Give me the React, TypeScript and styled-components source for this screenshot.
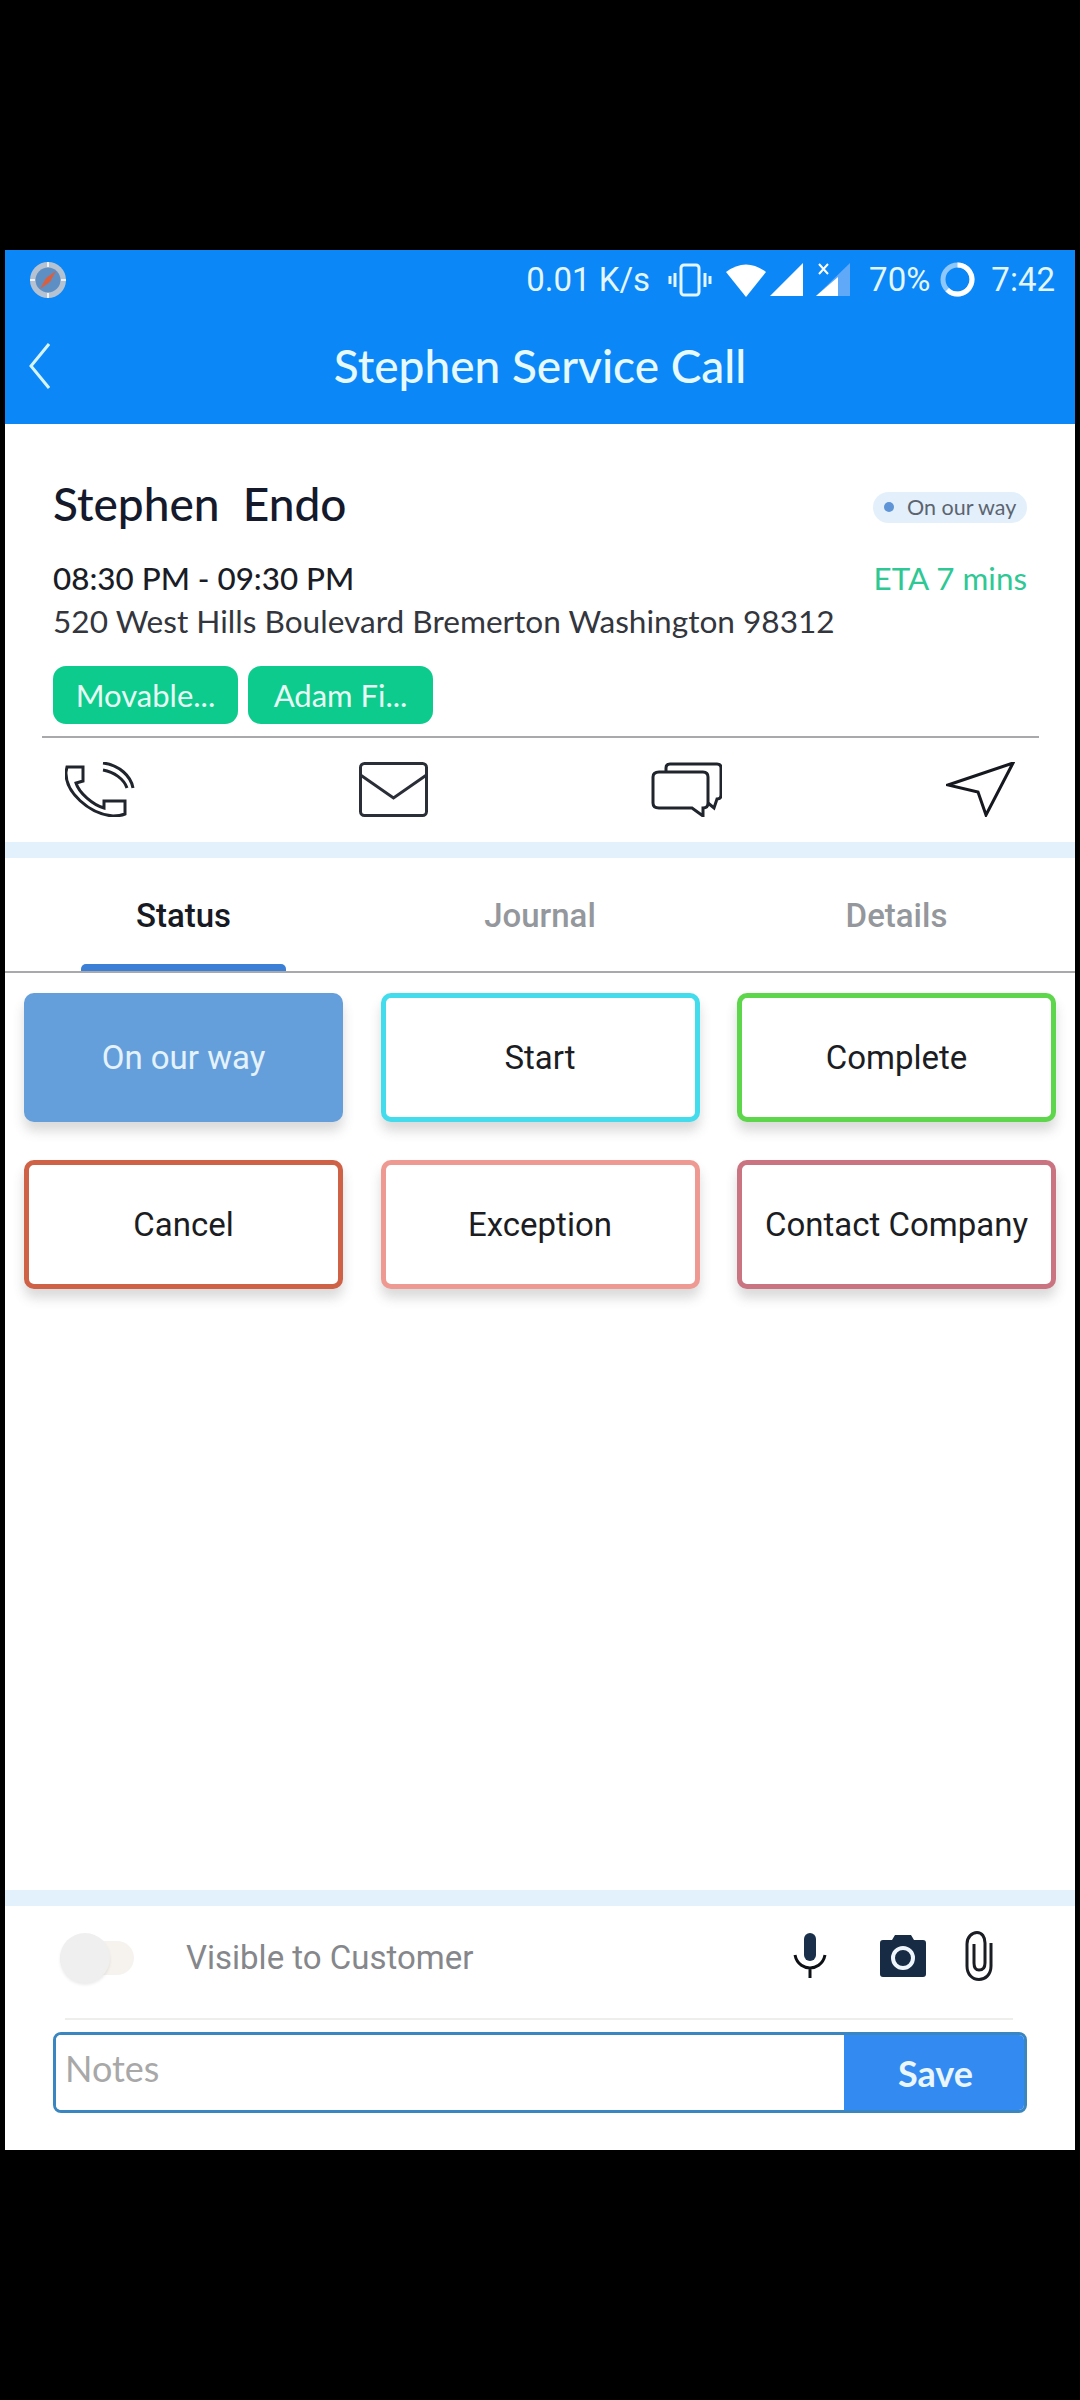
import * as React from 'react';
import styled, { createGlobalStyle } from 'styled-components';

const GlobalStyle = createGlobalStyle`
    html, body {
        margin: 0;
        padding: 0;
        background: #000;
    }
    * {
        box-sizing: border-box;
    }
`;

const Page = styled.div`
    width: 1080px;
    height: 2400px;
    padding: 250px 5px;
    background: #000;
    font-family: 'Lato', 'Noto Sans', sans-serif;
`;

const Screen = styled.div`
    display: flex;
    flex-direction: column;
    width: 1070px;
    height: 1900px;
    background: #fff;
`;

const Header = styled.header`
    background: #0b87f7;
    color: #e2f6fc;
`;

const StatusBar = styled.div`
    display: flex;
    align-items: center;
    justify-content: space-between;
    height: 64px;
    padding: 0 20px 5px 24px;
`;

const StatusRight = styled.div`
    display: flex;
    align-items: center;
`;

const StatusText = styled.span<{ $gap?: number }>`
    margin-left: ${props => props.$gap || 0}px;
    font-family: 'Roboto', sans-serif;
    font-size: 33px;
    line-height: 36px;
    white-space: nowrap;
`;

const StatusIcon = styled.svg<{ $gap: number }>`
    display: block;
    flex: none;
    margin-left: ${props => props.$gap}px;
`;

const NavBar = styled.div`
    display: flex;
    align-items: center;
    height: 110px;
    padding: 0 0 6px 24px;
`;

const NavTitle = styled.h1`
    flex: 1;
    margin: 0 0 0 -21px;
    padding-right: 24px;
    text-align: center;
    font-size: 46px;
    font-weight: 500;
    line-height: 56px;
    color: #e6f9fc;
`;

const Info = styled.section`
    padding: 56px 48px 12px 48px;
`;

const InfoRow = styled.div`
    display: flex;
    align-items: center;
    justify-content: space-between;
`;

const Name = styled.div`
    font-size: 46px;
    line-height: 48px;
    font-weight: 500;
    color: #14192b;
    white-space: pre;
`;

const StateChip = styled.div`
    display: flex;
    align-items: center;
    width: 154px;
    height: 31px;
    margin-top: 6px;
    padding-left: 11px;
    border-radius: 16px;
    background: #e3f0fb;
    font-size: 21.5px;
    color: #5c6470;
`;

const StateDot = styled.span`
    width: 10px;
    height: 10px;
    margin-right: 13px;
    border-radius: 50%;
    background: #5f94d6;
`;

const TimeRow = styled(InfoRow)`
    margin-top: 32px;
`;

const TimeText = styled.div`
    font-size: 31.4px;
    line-height: 36px;
    font-weight: 500;
    color: #1a1d26;
`;

const Eta = styled.div`
    font-size: 31.4px;
    line-height: 36px;
    color: #2fc894;
`;

const Address = styled.div`
    margin-top: 7px;
    font-size: 31.6px;
    line-height: 36px;
    color: #33363d;
    white-space: nowrap;
`;

const Tags = styled.div`
    display: flex;
    gap: 10px;
    margin-top: 27px;
`;

const Tag = styled.div`
    display: flex;
    align-items: center;
    justify-content: center;
    width: 185px;
    height: 58px;
    border-radius: 13px;
    background: #0dcb8d;
    color: #e8fbf4;
    font-size: 31px;
`;

const Divider = styled.div`
    height: 2px;
    margin: 0 36px 0 37px;
    background: #a9a9ab;
`;

const Actions = styled.div`
    display: flex;
    align-items: center;
    justify-content: space-between;
    padding: 24px 60px 25px;
`;

const Band = styled.div`
    flex: none;
    height: 16px;
    background: #e3f1fc;
`;

const TabBar = styled.div`
    display: grid;
    grid-template-columns: repeat(3, 319px);
    column-gap: 37.5px;
    height: 115px;
    padding: 0 19px;
    border-bottom: 2px solid #a9a9ab;
`;

const Tab = styled.div<{ $active?: boolean }>`
    display: flex;
    justify-content: center;
    position: relative;
    padding-top: 37px;
    font-family: 'Roboto', sans-serif;
    font-size: 33px;
    line-height: 42px;
    font-weight: 500;
    color: ${props => (props.$active ? '#171a22' : '#94979c')};

    &::after {
        content: '';
        display: ${props => (props.$active ? 'block' : 'none')};
        position: absolute;
        left: 57px;
        bottom: 0;
        width: 205px;
        height: 7px;
        border-radius: 5px 5px 0 0;
        background: #3b7fd6;
    }
`;

const StatusGrid = styled.div`
    flex: 1;
    display: grid;
    grid-template-columns: repeat(3, 319px);
    grid-auto-rows: 129px;
    gap: 38px 37.5px;
    align-content: start;
    padding: 20px 19px 0;
`;

const StatusButton = styled.div<{ $color: string; $filled?: boolean }>`
    display: flex;
    align-items: center;
    justify-content: center;
    border: 5px solid ${props => props.$color};
    border-radius: 10px;
    background: ${props => (props.$filled ? props.$color : '#fff')};
    box-shadow: 0 9px 12px rgba(70, 70, 70, 0.2);
    font-family: 'Roboto', sans-serif;
    font-size: 33px;
    color: ${props => (props.$filled ? '#e4f3fb' : '#1b1d23')};
    white-space: nowrap;
`;

const Visibility = styled.div`
    display: flex;
    align-items: center;
    height: 112px;
    padding: 0 0 9px 55px;
`;

const Toggle = styled.div`
    position: relative;
    flex: none;
    width: 74px;
    height: 34px;
    margin-right: 52px;
    border-radius: 17px;
    background: #f6f3ef;

    &::before {
        content: '';
        position: absolute;
        left: 0;
        top: -8px;
        width: 50px;
        height: 50px;
        border-radius: 50%;
        background: #efefef;
        box-shadow: 0 2px 3px rgba(0, 0, 0, 0.08);
    }
`;

const VisibleLabel = styled.div`
    flex: 1;
    font-family: 'Roboto', sans-serif;
    font-size: 33px;
    color: #85878b;
`;

const MediaIcons = styled.div`
    display: flex;
    align-items: center;
    margin-bottom: 4px;
    padding-right: 82px;
`;

const MediaIcon = styled.svg<{ $gap: number }>`
    display: block;
    margin-left: ${props => props.$gap}px;
`;

const ThinLine = styled.div`
    height: 2px;
    margin: 0 62px 0 60px;
    background: #eeeeea;
`;

const NotesForm = styled.div`
    display: flex;
    height: 81px;
    margin: 12px 48px 0;
    border: 3px solid #3a86c0;
    border-radius: 8px;
    overflow: hidden;
`;

const NotesField = styled.div`
    flex: 1;
    padding: 12px 0 0 9px;
    font-size: 36px;
    line-height: 42px;
    color: #a8a8a8;
    background: #fff;
`;

const SaveButton = styled.div`
    display: flex;
    align-items: center;
    justify-content: center;
    width: 183px;
    margin: -3px -3px -3px 0;
    background: #338af0;
    color: #e9f6fc;
    font-size: 36px;
    font-weight: 700;
`;

const BottomGap = styled.div`
    height: 37px;
`;

const tags = ['Movable...', 'Adam Fi...'];

const buttons = [
    { label: 'On our way', color: '#659fdb', filled: true },
    { label: 'Start', color: '#42dcec' },
    { label: 'Complete', color: '#5ed64b' },
    { label: 'Cancel', color: '#cf6147' },
    { label: 'Exception', color: '#ee9a92' },
    { label: 'Contact Company', color: '#c97480' }
];

const App = () => (
    <Page>
        <GlobalStyle />
        <Screen>
            <Header>
                <StatusBar>
                    <svg width="38" height="38" viewBox="0 0 38 38">
                        <circle cx="19" cy="19" r="18" fill="#b4c2d2" />
                        <circle cx="19" cy="19" r="12.500" fill="#5d8fc4" />
                        <path d="M27 10 L21 21 L11 28 L17 17 Z" fill="#d8603f" />
                        <path d="M19 1v5M19 32v5M1 19h5M32 19h5" stroke="#eef2f6" strokeWidth="2" />
                    </svg>
                    <StatusRight>
                        <StatusText>0.01 K/s</StatusText>
                        <StatusIcon $gap={18} width="44" height="34" viewBox="0 0 44 34" fill="none">
                            <rect x="13" y="2" width="18" height="30" rx="3" stroke="#e2f6fc" strokeWidth="3" />
                            <path d="M7 10v14M2 13v8M37 10v14M42 13v8" stroke="#e2f6fc" strokeWidth="3" />
                        </StatusIcon>
                        <StatusIcon $gap={14} width="40" height="34" viewBox="0 0 40 34">
                            <path d="M0 9 Q20 -6 40 9 L20 34 Z" fill="#fff" />
                        </StatusIcon>
                        <StatusIcon $gap={4} width="33" height="34" viewBox="0 0 33 34">
                            <path d="M33 0 V33 H0 Z" fill="#fff" />
                        </StatusIcon>
                        <StatusIcon $gap={13} width="34" height="34" viewBox="0 0 34 34">
                            <path d="M34 0 V33 H0 Z" fill="#5fa9f8" />
                            <path d="M22 14 V33 H0 Z" fill="#fff" />
                            <path d="M3 1 L12 11 M12 1 L3 11" stroke="#fff" strokeWidth="2" />
                        </StatusIcon>
                        <StatusText $gap={19}>70%</StatusText>
                        <StatusIcon $gap={10} width="35" height="35" viewBox="0 0 35 35" fill="none">
                            <circle cx="17.500" cy="17.500" r="14.500" stroke="#8ec7fa" strokeWidth="5" />
                            <path d="M17.500 3 A14.500 14.500 0 1 1 7.200 27.800" stroke="#fff" strokeWidth="5" />
                        </StatusIcon>
                        <StatusText $gap={16}>7:42</StatusText>
                    </StatusRight>
                </StatusBar>
                <NavBar>
                    <svg width="21" height="46" viewBox="0 0 21 46" fill="none">
                        <path d="M20 1 L2 23 L20 45" stroke="#d6f4fb" strokeWidth="3" />
                    </svg>
                    <NavTitle>Stephen Service Call</NavTitle>
                </NavBar>
            </Header>
            <Info>
                <InfoRow>
                    <Name>Stephen  Endo</Name>
                    <StateChip>
                        <StateDot />
                        On our way
                    </StateChip>
                </InfoRow>
                <TimeRow>
                    <TimeText>08:30 PM - 09:30 PM</TimeText>
                    <Eta>ETA 7 mins</Eta>
                </TimeRow>
                <Address>520 West Hills Boulevard Bremerton Washington 98312</Address>
                <Tags>
                    {tags.map(tag => (
                        <Tag key={tag}>{tag}</Tag>
                    ))}
                </Tags>
            </Info>
            <Divider />
            <Actions>
                <svg width="70" height="55" viewBox="0 0 70 55" fill="none" stroke="#20242c" strokeWidth="3">
                    <path d="M2 5 H18 V19 L11 21 C14 31 28 43 39 46 V39 H60 V52 Q55 54 48 54 C24 52 0 30 1 10 Z" />
                    <path d="M38 1 C54 3 66 14 68 26 M38 8 C49 10 59 17 62 26" />
                </svg>
                <svg width="69" height="55" viewBox="0 0 69 55" fill="none" stroke="#2a2e36" strokeWidth="3">
                    <rect x="1.500" y="1.500" width="66" height="52" rx="4" />
                    <path d="M1.500 13 L34.500 36 L67.500 13" />
                </svg>
                <svg width="71" height="55" viewBox="0 0 71 55" fill="none" stroke="#20242c" strokeWidth="3">
                    <path d="M15 9 V6 Q15 2 19 2 H66 Q70 2 70 6 V33 Q70 37 66 37 L63 46 L57 41" />
                    <path d="M8 10 H52 Q57 10 57 15 V41 Q57 46 52 46 V54 L41 46 H8 Q2 46 2 41 V15 Q2 10 8 10 Z" />
                </svg>
                <svg width="69" height="55" viewBox="0 0 69 55" fill="none" stroke="#16181f" strokeWidth="3">
                    <path d="M2 23 L67 1 L40 53 L32 30 Z" />
                </svg>
            </Actions>
            <Band />
            <TabBar>
                <Tab $active>Status</Tab>
                <Tab>Journal</Tab>
                <Tab>Details</Tab>
            </TabBar>
            <StatusGrid>
                {buttons.map(button => (
                    <StatusButton key={button.label} $color={button.color} $filled={button.filled}>
                        {button.label}
                    </StatusButton>
                ))}
            </StatusGrid>
            <Band />
            <Visibility>
                <Toggle />
                <VisibleLabel>Visible to Customer</VisibleLabel>
                <MediaIcons>
                    <MediaIcon $gap={0} width="34" height="45" viewBox="0 0 34 45" fill="none">
                        <rect x="11" y="0" width="12" height="28" rx="6" fill="#1a2f4a" />
                        <path d="M2 22 C4 32 12 35 17 35 C22 35 30 32 32 22 M17 35 V45" stroke="#0d1014" strokeWidth="3" />
                    </MediaIcon>
                    <MediaIcon $gap={53} width="46" height="42" viewBox="0 0 46 42">
                        <path d="M3 5 H12 L15 0 H31 L34 5 H43 Q46 5 46 8 V39 Q46 42 43 42 H3 Q0 42 0 39 V8 Q0 5 3 5 Z" fill="#172b45" />
                        <circle cx="23" cy="23" r="10" fill="#172b45" stroke="#eef5fb" strokeWidth="4" />
                    </MediaIcon>
                    <MediaIcon $gap={39} width="28" height="50" viewBox="0 0 28 50" fill="none">
                        <path d="M26 12 V35 C26 44 20 48.500 14 48.500 C7 48.500 2 43 2 35 V13 C2 6 7 1.500 12 1.500 C17 1.500 20 6 20 12 V32 C20 37 18 39 14 39 C10 39 9 36 9 32 V13" stroke="#1a1d24" strokeWidth="3" />
                    </MediaIcon>
                </MediaIcons>
            </Visibility>
            <ThinLine />
            <NotesForm>
                <NotesField>Notes</NotesField>
                <SaveButton>Save</SaveButton>
            </NotesForm>
            <BottomGap />
        </Screen>
    </Page>
);

export default App;
